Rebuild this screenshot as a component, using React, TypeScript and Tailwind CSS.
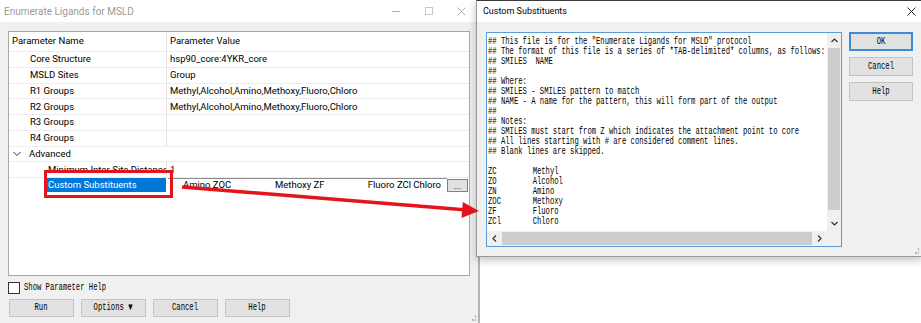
import React from "react";

function Row({
  name,
  value,
  nameCls,
}: {
  name: React.ReactNode;
  value?: React.ReactNode;
  nameCls: string;
}) {
  return (
    <div className="flex h-[15.75px] border-b border-[#ededed]">
      <div className={"w-[158px] shrink-0 h-full flex items-center whitespace-nowrap overflow-hidden border-r border-[#e3e3e3] " + nameCls}>{name}</div>
      <div className="flex-1 h-full flex items-center pl-[3px] whitespace-nowrap overflow-hidden">{value}</div>
    </div>
  );
}

function MonoBtn({ label, cls }: { label: React.ReactNode; cls: string }) {
  return (
    <div className={"flex items-center justify-center bg-[#e1e1e1] " + cls}>
      <span className="inline-block scale-x-[0.72] font-['Liberation_Mono',monospace] text-[10px] leading-[10px] text-black whitespace-pre">
        {label}
      </span>
    </div>
  );
}

const lines: string[] = [
  '## This file is for the "Enumerate Ligands for MSLD" protocol',
  "## The format of this file is a series of *TAB-delimited* columns, as follows:",
  "## SMILES  NAME",
  "##",
  "## Where:",
  "## SMILES - SMILES pattern to match",
  "## NAME - A name for the pattern, this will form part of the output",
  "##",
  "## Notes:",
  "## SMILES must start from Z which indicates the attachment point to core",
  "## All lines starting with # are considered comment lines.",
  "## Blank lines are skipped.",
  "",
];

const pairs: [string, string][] = [
  ["ZC", "Methyl"],
  ["ZO", "Alcohol"],
  ["ZN", "Amino"],
  ["ZOC", "Methoxy"],
  ["ZF", "Fluoro"],
  ["ZCl", "Chloro"],
];

export default function App() {
  return (
    <div className="relative w-[921px] h-[323px] bg-white overflow-hidden font-[Roboto,sans-serif] text-[9.5px] text-black">
      {/* Left window */}
      <div className="absolute left-0 top-0 w-[480px] h-[323px] bg-[#f0f0f0] border-r-2 border-[#b4b4b4] flex flex-col">
        <div className="h-[22px] bg-white flex items-center shrink-0">
          <span className="pl-[4px] text-[10px] text-[#9a9a9a]">Enumerate Ligands for MSLD</span>
          <div className="ml-auto flex h-full">
            <div className="w-[33px] flex items-center justify-center">
              <div className="w-[8px] h-px bg-[#b0b0b0]" />
            </div>
            <div className="w-[33px] flex items-center justify-center">
              <div className="w-[8px] h-[8px] border border-[#c8c8c8]" />
            </div>
            <div className="w-[33px] flex items-center justify-center">
              <svg width="9" height="9" viewBox="0 0 9 9">
                <path d="M0.5 0.5 L8.5 8.5 M8.5 0.5 L0.5 8.5" stroke="#b0b0b0" strokeWidth="1" />
              </svg>
            </div>
          </div>
        </div>
        <div className="flex flex-col pl-[8px] pt-[9px]">
          <div className="w-[462px] h-[245px] bg-white border border-[#a8a8a8] flex flex-col">
            <div className="flex h-[20px] border-b border-[#ededed]">
              <div className="w-[158px] shrink-0 flex items-center border-r border-[#e3e3e3] pl-[3px]">Parameter Name</div>
              <div className="flex-1 flex items-center pl-[3px]">Parameter Value</div>
            </div>
            <Row nameCls="pl-[21px]" name="Core Structure" value="hsp90_core:4YKR_core" />
            <Row nameCls="pl-[21px]" name="MSLD Sites" value="Group" />
            <Row nameCls="pl-[21px]" name="R1 Groups" value="Methyl,Alcohol,Amino,Methoxy,Fluoro,Chloro" />
            <Row nameCls="pl-[21px]" name="R2 Groups" value="Methyl,Alcohol,Amino,Methoxy,Fluoro,Chloro" />
            <Row nameCls="pl-[21px]" name="R3 Groups" />
            <Row nameCls="pl-[21px]" name="R4 Groups" />
            <div className="flex h-[15.75px] border-b border-[#ededed] items-center">
              <svg className="ml-[4px]" width="8" height="6" viewBox="0 0 8 6">
                <path d="M0.5 1 L4 4.5 L7.5 1" stroke="#333" strokeWidth="1" fill="none" />
              </svg>
              <span className="ml-[8px]">Advanced</span>
            </div>
            <Row nameCls="pl-[39px]" name="Minimum Inter-Site Distance" value="1" />
            <div className="flex h-[15.75px]">
              <div className="w-[158px] shrink-0 h-full pl-[37px]">
                <div className="w-[120px] h-[14px] bg-[#0078d7] text-white flex items-center pl-[2px] whitespace-nowrap">Custom Substituents</div>
              </div>
              <div className="flex-1 h-full flex">
                <div className="flex-1 h-[14px] border-t border-[#8a8a8a] bg-white flex items-center pl-[15px] pr-[6px] ml-[1px] whitespace-nowrap">
                  <span className="w-[92px]">Amino ZOC</span>
                  <span>Methoxy ZF</span>
                  <span className="ml-auto">Fluoro ZCl Chloro</span>
                </div>
                <div className="w-[21px] h-[13px] mt-[1px] mr-[1px] bg-[#e1e1e1] border border-[#4d8fd3] flex items-end justify-center leading-[8px] pb-[1px]">...</div>
              </div>
            </div>
          </div>
          <div className="flex items-center mt-[6px] h-[12px]">
            <div className="w-[12px] h-[12px] bg-white border border-[#333]" />
            <span className="ml-[4px] inline-block origin-left scale-x-[0.72] font-['Liberation_Mono',monospace] text-[10px] leading-[10px] whitespace-pre">
              Show Parameter Help
            </span>
          </div>
          <div className="flex gap-[7px] mt-[5px] pl-[1px]">
            <MonoBtn label="Run" cls="w-[65px] h-[18px] border border-[#c4c4c4]" />
            <MonoBtn label="Options ▼" cls="w-[65px] h-[18px] border border-[#c4c4c4]" />
            <MonoBtn label="Cancel" cls="w-[65px] h-[18px] border border-[#c4c4c4]" />
            <MonoBtn label="Help" cls="w-[65px] h-[18px] border border-[#c4c4c4]" />
          </div>
        </div>
        <div className="absolute right-[2px] bottom-[2px] w-[6px] h-[6px] grid grid-cols-3 gap-px">
          <span /><span /><span className="bg-[#b5b5b5]" />
          <span /><span className="bg-[#b5b5b5]" /><span className="bg-[#b5b5b5]" />
        </div>
      </div>

      {/* Right dialog */}
      <div className="absolute left-[476px] top-0 w-[446px] h-[257px] bg-[#f0f0f0] border-x border-b border-t border-[#9a9a9a] border-t-[#3a3a3a] shadow-[0_3px_8px_rgba(0,0,0,0.25)] flex flex-col">
        <div className="h-[21px] bg-white flex items-center shrink-0">
          <span className="pl-[6px] text-[9px]">Custom Substituents</span>
          <svg className="ml-auto mr-[5px]" width="9" height="9" viewBox="0 0 9 9">
            <path d="M0.5 0.5 L8.5 8.5 M8.5 0.5 L0.5 8.5" stroke="#222" strokeWidth="1" />
          </svg>
        </div>
        <div className="flex pl-[9px] pt-[10px]">
          <div className="w-[356px] h-[215px] border border-[#5b9bdc] bg-white flex flex-col">
            <div className="flex flex-1 min-h-0">
              <div className="flex-1 overflow-hidden pt-[4px] pl-[1px]">
                <div className="origin-top-left scale-x-[0.72] font-['Liberation_Mono',monospace] text-[10px] leading-[10px] whitespace-pre w-[480px] font-medium">
                  {lines.map((l, i) => (
                    <div key={i} className="h-[10px]">{l}</div>
                  ))}
                  {pairs.map(([a, b]) => (
                    <div key={a} className="h-[10px] flex">
                      <span className="w-[62px]">{a}</span>
                      <span>{b}</span>
                    </div>
                  ))}
                </div>
              </div>
              <div className="w-[14px] bg-[#f0f0f0] flex flex-col">
                <div className="h-[15px] flex items-center justify-center">
                  <svg width="7" height="5" viewBox="0 0 7 5">
                    <path d="M0.5 4 L3.5 1 L6.5 4" stroke="#333" strokeWidth="1.2" fill="none" />
                  </svg>
                </div>
                <div className="h-[162px] mx-[1px] bg-[#cdcdcd]" />
                <div className="flex-1" />
                <div className="h-[15px] flex items-center justify-center">
                  <svg width="7" height="5" viewBox="0 0 7 5">
                    <path d="M0.5 1 L3.5 4 L6.5 1" stroke="#333" strokeWidth="1.2" fill="none" />
                  </svg>
                </div>
              </div>
            </div>
            <div className="h-[15px] flex shrink-0">
              <div className="flex-1 bg-[#f0f0f0] flex items-center">
                <div className="w-[15px] flex items-center justify-center">
                  <svg width="5" height="7" viewBox="0 0 5 7">
                    <path d="M4 0.5 L1 3.5 L4 6.5" stroke="#333" strokeWidth="1.2" fill="none" />
                  </svg>
                </div>
                <div className="flex-1 h-[13px] bg-[#cdcdcd]" />
                <div className="w-[15px] flex items-center justify-center">
                  <svg width="5" height="7" viewBox="0 0 5 7">
                    <path d="M1 0.5 L4 3.5 L1 6.5" stroke="#333" strokeWidth="1.2" fill="none" />
                  </svg>
                </div>
              </div>
              <div className="w-[14px] bg-[#f0f0f0]" />
            </div>
          </div>
          <div className="ml-[7px] flex flex-col gap-[6px]">
            <MonoBtn label="OK" cls="w-[64px] h-[19px] border-2 border-[#3c8ad8]" />
            <MonoBtn label="Cancel" cls="w-[64px] h-[19px] border border-[#c4c4c4]" />
            <MonoBtn label="Help" cls="w-[64px] h-[19px] border border-[#c4c4c4]" />
          </div>
        </div>
        <div className="absolute right-[2px] bottom-[2px] w-[6px] h-[6px] grid grid-cols-3 gap-px">
          <span /><span /><span className="bg-[#b5b5b5]" />
          <span /><span className="bg-[#b5b5b5]" /><span className="bg-[#b5b5b5]" />
        </div>
      </div>

      {/* Annotation: red box and arrow */}
      <div className="absolute left-[44px] top-[170px] w-[129px] h-[28px] border-[3px] border-[#e3141c]" />
      <svg className="absolute left-0 top-0 pointer-events-none" width="921" height="323" viewBox="0 0 921 323">
        <line x1="182" y1="187" x2="464" y2="209.8" stroke="#e3141c" strokeWidth="3.5" />
        <polygon points="479,211 461.5,218 462.8,202" fill="#e3141c" />
      </svg>
    </div>
  );
}
